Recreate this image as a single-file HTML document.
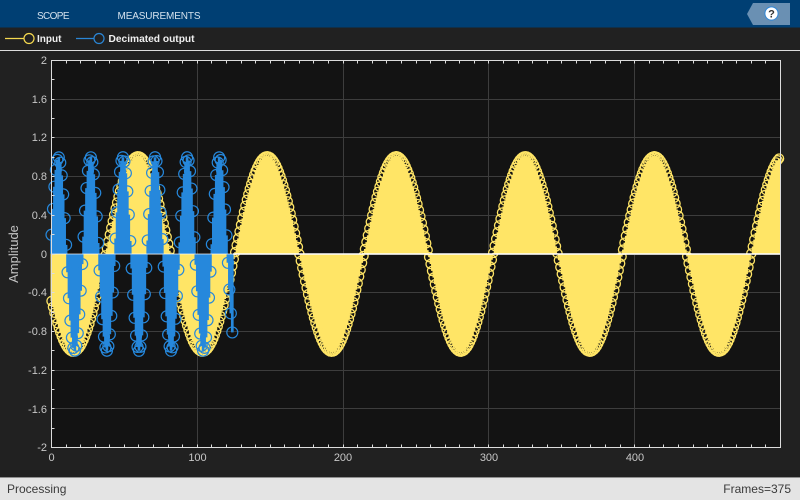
<!DOCTYPE html>
<html>
<head>
<meta charset="utf-8">
<style>
html,body{margin:0;padding:0;width:800px;height:500px;overflow:hidden;background:#212121}
svg{position:absolute;left:0;top:0;display:block}
text{font-family:"Liberation Sans",sans-serif}
</style>
</head>
<body>
<svg id="s" width="800" height="500" viewBox="0 0 800 500" xmlns="http://www.w3.org/2000/svg">
<rect x="0" y="0" width="800" height="500" fill="#212121"/>
<rect x="0" y="0" width="800" height="27.5" fill="#003f73"/>
<text x="37" y="19" font-size="10" fill="#d4e2ee" textLength="32.5">SCOPE</text>
<text x="117.5" y="19" font-size="10" fill="#d4e2ee" textLength="83">MEASUREMENTS</text>
<polygon points="747,14 753,3 790,3 790,25 753,25" fill="#6a90b3"/>
<circle cx="771.5" cy="13.5" r="6.6" fill="#fff" stroke="#2f86d6" stroke-width="1"/>
<text x="771.5" y="17.5" font-size="11" font-weight="bold" fill="#333" text-anchor="middle">?</text>
<rect x="0" y="50" width="800" height="1" fill="#dcdcdc"/>
<line x1="5" y1="38.5" x2="24" y2="38.5" stroke="#f5d94f" stroke-width="1.2"/>
<circle cx="29" cy="38.5" r="5" fill="none" stroke="#f5d94f" stroke-width="1.2"/>
<text x="37" y="42" font-size="10" font-weight="bold" fill="#f0f0f0">Input</text>
<line x1="76" y1="38.5" x2="94" y2="38.5" stroke="#2a86d6" stroke-width="1.2"/>
<circle cx="99" cy="38.5" r="5" fill="none" stroke="#2a86d6" stroke-width="1.2"/>
<text x="108.5" y="42" font-size="10.2" font-weight="bold" fill="#f0f0f0">Decimated output</text>
<rect x="51.5" y="60.5" width="729" height="387" fill="#131313"/>
<g id="grid"></g>
<g id="plot"></g>
<rect x="51.5" y="60.5" width="729" height="387" fill="none" stroke="#dcdcdc" stroke-width="1"/>
<g font-size="11" fill="#c8c8c8" text-anchor="end">
<text x="47" y="64">2</text>
<text x="47" y="103">1.6</text>
<text x="47" y="141">1.2</text>
<text x="47" y="180">0.8</text>
<text x="47" y="219">0.4</text>
<text x="47" y="258">0</text>
<text x="47" y="296">-0.4</text>
<text x="47" y="335">-0.8</text>
<text x="47" y="374">-1.2</text>
<text x="47" y="413">-1.6</text>
<text x="47" y="451">-2</text>
</g>
<g font-size="11" fill="#c8c8c8" text-anchor="middle">
<text x="51.5" y="461">0</text>
<text x="197.5" y="461">100</text>
<text x="343" y="461">200</text>
<text x="489" y="461">300</text>
<text x="635" y="461">400</text>
</g>
<text transform="translate(18 254) rotate(-90)" font-size="13" fill="#c4c4c4" text-anchor="middle">Amplitude</text>
<rect x="0" y="477" width="800" height="23" fill="#e4e4e4"/>
<rect x="0" y="477" width="800" height="1" fill="#8f8f8f"/>
<text x="7" y="493" font-size="12" fill="#3a3a3a">Processing</text>
<text x="791" y="493" font-size="12" fill="#3a3a3a" text-anchor="end">Frames=375</text>
</svg>
<script>
(function(){
var NS="http://www.w3.org/2000/svg";
var X0=51.5,SX=1.458,Y0=254,SY=96.75;
var grid=document.getElementById("grid"),plot=document.getElementById("plot");
function p(d,c,w,op){var e=document.createElementNS(NS,"path");e.setAttribute("d",d);e.setAttribute("stroke",c);e.setAttribute("stroke-width",w);e.setAttribute("fill","none");if(op)e.setAttribute("stroke-opacity",op);plot.appendChild(e);return e;}
var g="",t="";
for(var i=1;i<5;i++){var x=X0+i*100*SX;g+="M"+Math.round(x-.5)+".5 60.5V447.5";}
for(var v=-1.6;v<1.7;v+=.4){var y=Y0-v*SY;g+="M51.5 "+(Math.round(y-.5)+.5)+"H780.5";}
var ge=document.createElementNS(NS,"path");ge.setAttribute("d",g);ge.setAttribute("stroke","#3d3d3d");ge.setAttribute("stroke-width","1");grid.appendChild(ge);
for(var i=1;i<50;i++){var x=Math.round(X0+i*10*SX-.5)+.5;t+="M"+x+" 60.5v3M"+x+" 447.5v-3";}
for(var i=-9;i<10;i++){var y=Math.round(Y0-i*.2*SY-.5)+.5;t+="M51.5 "+y+"h3";}
var ye="",yc="",be="",bc="";
for(var k=0;k<500;k++){
 var x=X0+k*SX;
 var val=1.01*Math.cos(2*Math.PI*(x-138)/129.1);
 var y=Y0-val*SY;
 ye+="M"+x.toFixed(2)+" "+Y0+"V"+y.toFixed(2);
 yc+="M"+(x-4.6).toFixed(2)+" "+y.toFixed(2)+"a4.6 4.6 0 1 0 9.2 0a4.6 4.6 0 1 0 -9.2 0";
}
for(var k=0;k<125;k++){
 var x=X0+k*SX;
 var val=Math.sin(.2+k*.2847);
 var y=Y0-val*SY;
 be+="M"+x.toFixed(2)+" "+Y0+"V"+y.toFixed(2);
 bc+="M"+(x-5.5).toFixed(2)+" "+y.toFixed(2)+"a5.5 5.5 0 1 0 11 0a5.5 5.5 0 1 0 -11 0";
}
p(ye,"#ffe566",2);
p(yc,"#ffe566",1.3);
p(be,"#2688dc",2.7);
p("M233 254H780.5","#ffffff",1.5);
p("M51.5 254H233","#ffffff",1.2,"0.55");
p(bc,"#2688dc",1.2);
var te=document.createElementNS(NS,"path");te.setAttribute("d",t);te.setAttribute("stroke","#dcdcdc");te.setAttribute("stroke-width","1");plot.appendChild(te);
})();
</script>
</body>
</html>
